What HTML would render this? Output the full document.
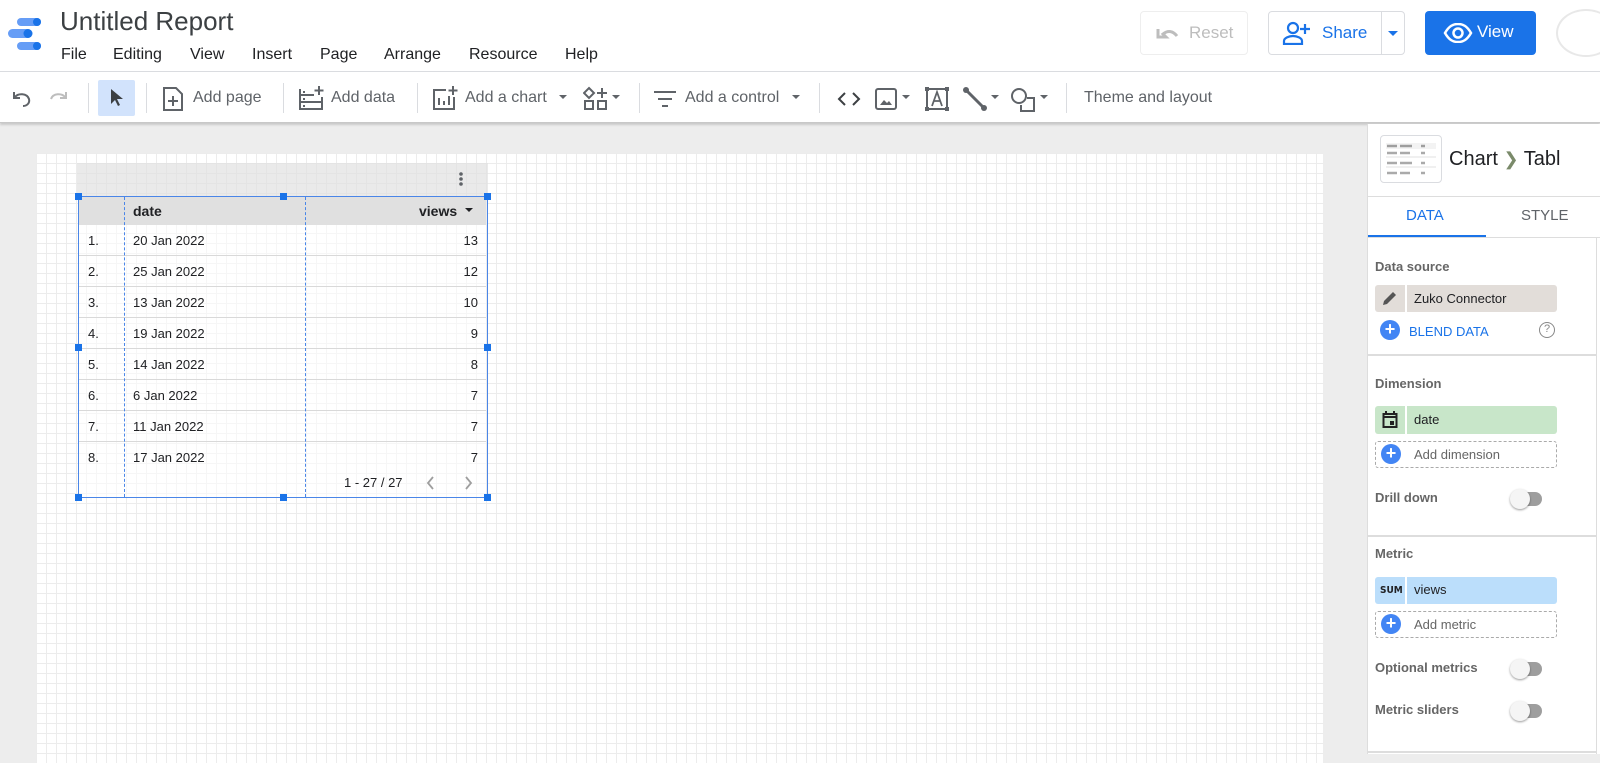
<!DOCTYPE html>
<html><head><meta charset="utf-8"><style>
*{box-sizing:border-box;margin:0;padding:0}
body{width:1600px;height:754px;overflow:hidden;font-family:"Liberation Sans",Arial,sans-serif;background:#ededed;position:relative;color:#202124}
.a{position:absolute}
.hdr{left:0;top:0;width:1600px;height:72px;background:#fff;border-bottom:1px solid #dadce0}
.tb{left:0;top:72px;width:1600px;height:51px;background:#fff;border-bottom:1px solid #c8c8c8;box-shadow:0 2px 2px rgba(0,0,0,.15)}
.menu span{position:absolute;top:46px;font-size:16px;color:#202124}
.tt{font-size:16px;color:#5f6368;top:89px}
.sep{width:1px;height:30px;background:#dadce0;top:83px}
.page{left:36px;top:153px;width:1287px;height:610px;background-color:#fff;
background-image:linear-gradient(#ececec 1px,transparent 1px),linear-gradient(90deg,#ececec 1px,transparent 1px);background-size:10px 10px}
.td{position:absolute;font-size:13px;color:#202124}
.rl{position:absolute;left:79px;width:407px;height:1px;background:#d9d9d9}
.panel{left:1367px;top:124px;width:233px;height:630px;background:#fff;border-left:1px solid #ddd}
.lbl{position:absolute;left:1375px;font-size:13px;font-weight:bold;color:#666}
.tog{position:absolute;left:1512px;width:30px;height:14px;border-radius:7px;background:#9e9e9e}
.tog:before{content:"";position:absolute;left:-2px;top:-3px;width:20px;height:20px;border-radius:50%;background:#f5f5f5;box-shadow:0 1px 2px rgba(0,0,0,.4)}
.plus{position:absolute;width:20px;height:20px;border-radius:50%;background:#4285f4;color:#fff;font-size:18px;line-height:19px;text-align:center;font-weight:bold}
.div{position:absolute;left:1368px;width:228px;height:2px;background:#ddd}
.h{position:absolute;width:7px;height:7px;background:#1a73e8}
</style></head><body>
<div class="a hdr"></div>
<svg class="a" style="left:8px;top:16px" width="36" height="36" viewBox="0 0 36 36">
<rect x="9" y="2" width="24" height="8" rx="4" fill="#669df6"/><circle cx="29" cy="6" r="4" fill="#1a73e8"/>
<rect x="0" y="13" width="24" height="9" rx="4.5" fill="#669df6"/><circle cx="20" cy="17.5" r="4.5" fill="#1a73e8"/>
<rect x="9" y="26" width="24" height="8" rx="4" fill="#669df6"/><circle cx="29" cy="30" r="4" fill="#1a73e8"/></svg>
<div class="a" style="left:60px;top:6px;font-size:26px;color:#3c4043">Untitled Report</div>
<div class="menu"><span style="left:61px">File</span><span style="left:113px">Editing</span><span style="left:190px">View</span><span style="left:252px">Insert</span><span style="left:320px">Page</span><span style="left:384px">Arrange</span><span style="left:469px">Resource</span><span style="left:565px">Help</span></div>
<div class="a" style="left:1140px;top:11px;width:108px;height:44px;border:1px solid #eee;border-radius:4px;color:#bdbdbd;font-size:17px;padding:11px 0 0 48px">Reset</div>
<svg class="a" style="left:1154px;top:25px" width="26" height="16" viewBox="0 0 26 16"><path d="M4 4v8h8l-3-3c5-4 10-3 14 2" fill="none" stroke="#bdbdbd" stroke-width="3"/></svg>
<div class="a" style="left:1268px;top:11px;width:137px;height:44px;border:1px solid #dadce0;border-radius:4px"></div>
<div class="a" style="left:1381px;top:12px;width:1px;height:42px;background:#dadce0"></div>
<svg class="a" style="left:1281px;top:21px" width="30" height="24" viewBox="0 0 30 24"><circle cx="12" cy="7" r="5" fill="none" stroke="#1a73e8" stroke-width="2.2"/><path d="M3 23v-3c0-3 5-5 9-5s9 2 9 5v3z" fill="none" stroke="#1a73e8" stroke-width="2.2"/><path d="M24 3v10M19 8h10" stroke="#1a73e8" stroke-width="2.2"/></svg>
<div class="a" style="left:1322px;top:23px;font-size:17px;color:#1a73e8">Share</div>
<div class="a" style="left:1388px;top:31px;border:5px solid transparent;border-top-color:#1a73e8"></div>
<div class="a" style="left:1425px;top:11px;width:111px;height:44px;background:#1a73e8;border-radius:4px;color:#fff;font-size:17px;padding:11px 0 0 52px;font-weight:500">View</div>
<svg class="a" style="left:1443px;top:23px" width="30" height="20" viewBox="0 0 30 20"><path d="M2 10C6 3 10 1 15 1s9 2 13 9c-4 7-8 9-13 9S6 17 2 10z" fill="none" stroke="#fff" stroke-width="2.5"/><circle cx="15" cy="10" r="4.5" fill="none" stroke="#fff" stroke-width="2.5"/></svg>
<div class="a" style="left:1556px;top:9px;width:60px;height:48px;border:2px solid #e8e8e8;border-radius:50%"></div>

<div class="a tb"></div>
<svg class="a" style="left:10px;top:88px" width="60" height="20" viewBox="0 0 60 20"><path d="M4 4v6h6M5 9c3-4 12-4 14 2 1 4-2 7-6 7" fill="none" stroke="#5f6368" stroke-width="2"/><path d="M56 4v6h-6M55 9c-3-4-12-4-14 2" fill="none" stroke="#bdbdbd" stroke-width="2"/></svg>
<div class="a sep" style="left:88px"></div>
<div class="a" style="left:98px;top:80px;width:37px;height:36px;background:#d2e3fc;border-radius:2px"></div>
<svg class="a" style="left:108px;top:88px" width="16" height="20" viewBox="0 0 16 20"><path d="M3 1v15l4-4 3 6 2-1-3-6h6z" fill="#3c4043"/></svg>
<div class="a sep" style="left:146px"></div>
<svg class="a" style="left:162px;top:86px" width="22" height="26" viewBox="0 0 22 26"><path d="M2 2h12l6 6v16H2z" fill="none" stroke="#5f6368" stroke-width="2"/><path d="M11 10v10M6 15h10" stroke="#5f6368" stroke-width="2"/></svg>
<div class="a tt" style="left:193px">Add page</div>
<div class="a sep" style="left:283px"></div>
<svg class="a" style="left:298px;top:85px" width="28" height="26" viewBox="0 0 28 26"><path d="M2 4v20h22V12M2 10h14M2 17h22M5 14h2M5 21h2M5 7h2" fill="none" stroke="#5f6368" stroke-width="2"/><path d="M21 1v9M16.5 5.5h9" stroke="#5f6368" stroke-width="2"/></svg>
<div class="a tt" style="left:331px">Add data</div>
<div class="a sep" style="left:417px"></div>
<svg class="a" style="left:432px;top:85px" width="28" height="26" viewBox="0 0 28 26"><path d="M14 5H2v19h20V12" fill="none" stroke="#5f6368" stroke-width="2"/><path d="M7 20v-7M12 20v-4M17 20v-9M21 1v9M16.5 5.5h9" stroke="#5f6368" stroke-width="2"/></svg>
<div class="a tt" style="left:465px">Add a chart</div>
<div class="a" style="left:559px;top:95px;border:4px solid transparent;border-top-color:#5f6368"></div>
<svg class="a" style="left:583px;top:86px" width="26" height="26" viewBox="0 0 26 26"><path d="M6 2l5 5-5 5-5-5z" fill="none" stroke="#5f6368" stroke-width="2"/><path d="M19 2v10M14 7h10" stroke="#5f6368" stroke-width="2"/><rect x="2" y="15" width="8" height="8" fill="none" stroke="#5f6368" stroke-width="2"/><rect x="15" y="15" width="8" height="8" fill="none" stroke="#5f6368" stroke-width="2"/></svg>
<div class="a" style="left:612px;top:95px;border:4px solid transparent;border-top-color:#5f6368"></div>
<div class="a sep" style="left:639px"></div>
<svg class="a" style="left:653px;top:90px" width="24" height="18" viewBox="0 0 24 18"><path d="M1 2h22M5 9h14M9 16h6" stroke="#5f6368" stroke-width="2"/></svg>
<div class="a tt" style="left:685px">Add a control</div>
<div class="a" style="left:792px;top:95px;border:4px solid transparent;border-top-color:#5f6368"></div>
<div class="a sep" style="left:819px"></div>
<svg class="a" style="left:836px;top:90px" width="26" height="18" viewBox="0 0 26 18"><path d="M9 3L3 9l6 6M17 3l6 6-6 6" fill="none" stroke="#3c4043" stroke-width="2"/></svg>
<svg class="a" style="left:874px;top:87px" width="24" height="24" viewBox="0 0 24 24"><rect x="2" y="2" width="20" height="20" rx="2" fill="none" stroke="#5f6368" stroke-width="2"/><path d="M6 18l4-5 3 3 2-2 3 4z" fill="#5f6368"/></svg>
<div class="a" style="left:902px;top:95px;border:4px solid transparent;border-top-color:#5f6368"></div>
<svg class="a" style="left:924px;top:86px" width="26" height="26" viewBox="0 0 26 26"><rect x="3" y="3" width="20" height="20" fill="none" stroke="#5f6368" stroke-width="2"/><rect x="1" y="1" width="4" height="4" fill="#5f6368"/><rect x="21" y="1" width="4" height="4" fill="#5f6368"/><rect x="1" y="21" width="4" height="4" fill="#5f6368"/><rect x="21" y="21" width="4" height="4" fill="#5f6368"/><path d="M8 20l5-14 5 14M10 15h6" fill="none" stroke="#5f6368" stroke-width="1.8"/></svg>
<svg class="a" style="left:962px;top:86px" width="26" height="26" viewBox="0 0 26 26"><path d="M4 4l18 18" stroke="#5f6368" stroke-width="3"/><circle cx="4" cy="4" r="3" fill="#5f6368"/><circle cx="22" cy="22" r="3" fill="#5f6368"/></svg>
<div class="a" style="left:991px;top:95px;border:4px solid transparent;border-top-color:#5f6368"></div>
<svg class="a" style="left:1010px;top:86px" width="28" height="28" viewBox="0 0 28 28"><circle cx="9" cy="10" r="7" fill="none" stroke="#5f6368" stroke-width="2"/><path d="M17 12h7v13H11v-6" fill="none" stroke="#5f6368" stroke-width="2"/></svg>
<div class="a" style="left:1040px;top:95px;border:4px solid transparent;border-top-color:#5f6368"></div>
<div class="a sep" style="left:1066px"></div>
<div class="a tt" style="left:1084px">Theme and layout</div>

<div class="a page"></div>
<div class="a" style="left:77px;top:163px;width:411px;height:33px;background:rgba(225,225,225,.7)"></div>
<svg class="a" style="left:458px;top:171px" width="6" height="16"><circle cx="3" cy="3" r="1.8" fill="#5f6368"/><circle cx="3" cy="8" r="1.8" fill="#5f6368"/><circle cx="3" cy="13" r="1.8" fill="#5f6368"/></svg>
<div class="a" style="left:79px;top:197px;width:407px;height:300px;background:rgba(255,255,255,.55)"></div>
<div class="a" style="left:79px;top:197px;width:407px;height:28px;background:#e0e0e0"></div>
<div class="td" style="left:133px;top:203px;font-size:14px;font-weight:bold">date</div>
<div class="td" style="left:419px;top:203px;font-size:14px;font-weight:bold">views</div>
<div class="a" style="left:465px;top:208px;border:4px solid transparent;border-top-color:#202124"></div>
<div class="rl" style="top:255px"></div><div class="rl" style="top:286px"></div><div class="rl" style="top:317px"></div><div class="rl" style="top:348px"></div><div class="rl" style="top:379px"></div><div class="rl" style="top:410px"></div><div class="rl" style="top:441px"></div>
<div class="td" style="left:88px;top:233px">1.</div><div class="td" style="left:133px;top:233px">20 Jan 2022</div><div class="td" style="right:1122px;top:233px">13</div>
<div class="td" style="left:88px;top:264px">2.</div><div class="td" style="left:133px;top:264px">25 Jan 2022</div><div class="td" style="right:1122px;top:264px">12</div>
<div class="td" style="left:88px;top:295px">3.</div><div class="td" style="left:133px;top:295px">13 Jan 2022</div><div class="td" style="right:1122px;top:295px">10</div>
<div class="td" style="left:88px;top:326px">4.</div><div class="td" style="left:133px;top:326px">19 Jan 2022</div><div class="td" style="right:1122px;top:326px">9</div>
<div class="td" style="left:88px;top:357px">5.</div><div class="td" style="left:133px;top:357px">14 Jan 2022</div><div class="td" style="right:1122px;top:357px">8</div>
<div class="td" style="left:88px;top:388px">6.</div><div class="td" style="left:133px;top:388px">6 Jan 2022</div><div class="td" style="right:1122px;top:388px">7</div>
<div class="td" style="left:88px;top:419px">7.</div><div class="td" style="left:133px;top:419px">11 Jan 2022</div><div class="td" style="right:1122px;top:419px">7</div>
<div class="td" style="left:88px;top:450px">8.</div><div class="td" style="left:133px;top:450px">17 Jan 2022</div><div class="td" style="right:1122px;top:450px">7</div>
<div class="td" style="left:344px;top:475px">1 - 27 / 27</div>
<svg class="a" style="left:425px;top:475px" width="50" height="16"><path d="M8 2L3 8l5 6M41 2l5 6-5 6" fill="none" stroke="#9e9e9e" stroke-width="1.8"/></svg>
<div class="a" style="left:78px;top:196px;width:410px;height:302px;border:1.5px solid #4a86e8"></div>
<div class="a" style="left:124px;top:197px;height:300px;border-left:1px dashed #4a86e8"></div>
<div class="a" style="left:305px;top:197px;height:300px;border-left:1px dashed #4a86e8"></div>
<div class="h" style="left:75px;top:193px"></div><div class="h" style="left:280px;top:193px"></div><div class="h" style="left:484px;top:193px"></div>
<div class="h" style="left:75px;top:344px"></div><div class="h" style="left:484px;top:344px"></div>
<div class="h" style="left:75px;top:494px"></div><div class="h" style="left:280px;top:494px"></div><div class="h" style="left:484px;top:494px"></div>

<div class="a panel"></div>
<div class="a" style="left:1380px;top:135px;width:62px;height:48px;border:1px solid #dadce0;border-radius:4px;background:#fff"></div>
<svg class="a" style="left:1386px;top:143px" width="50" height="34"><path d="M1 3h10M14 3h12M35 3h4" stroke="#555" stroke-width="2.5"/><path d="M1 10h10M14 10h10M35 10h4M1 20h10M14 20h12M35 20h4M1 30h10M14 30h10M35 30h4" stroke="#aaa" stroke-width="2.5"/><path d="M0 14h50M0 24h50" stroke="#e0e0e0"/><rect x="0" y="0" width="50" height="6" fill="#e8e8e8" opacity=".5"/></svg>
<div class="a" style="left:1449px;top:148px;font-size:20px;color:#202124;white-space:nowrap">Chart <span style="color:#7a8a6a;font-size:18px">&#x276F;</span> Tabl</div>
<div class="a" style="left:1368px;top:196px;width:232px;height:1px;background:#ddd"></div>
<div class="a" style="left:1406px;top:207px;font-size:15px;color:#1a73e8;font-weight:500">DATA</div>
<div class="a" style="left:1521px;top:207px;font-size:15px;color:#5f6368">STYLE</div>
<div class="a" style="left:1368px;top:235px;width:118px;height:3px;background:#1a73e8"></div>
<div class="a" style="left:1368px;top:237px;width:232px;height:1px;background:#ddd"></div>
<div class="a" style="left:1596px;top:237px;width:1px;height:517px;background:#ddd"></div>
<div class="lbl" style="top:259px">Data source</div>
<div class="a" style="left:1375px;top:285px;width:182px;height:27px;background:#e2ddd9;border-radius:3px"></div>
<div class="a" style="left:1405px;top:285px;width:2px;height:27px;background:#fff"></div>
<svg class="a" style="left:1382px;top:290px" width="16" height="16"><path d="M1 15l1-4L11 2l3 3-9 9z" fill="#555"/></svg>
<div class="a" style="left:1414px;top:291px;font-size:13px">Zuko Connector</div>
<div class="plus" style="left:1380px;top:320px">+</div>
<div class="a" style="left:1409px;top:324px;font-size:13px;color:#1a73e8">BLEND DATA</div>
<div class="a" style="left:1539px;top:322px;width:16px;height:16px;border:1.5px solid #888;border-radius:50%;font-size:11px;color:#888;text-align:center;line-height:13px">?</div>
<div class="div" style="top:354px"></div>
<div class="lbl" style="top:376px">Dimension</div>
<div class="a" style="left:1375px;top:406px;width:182px;height:28px;background:#c8e6c9;border-radius:3px"></div>
<div class="a" style="left:1405px;top:406px;width:2px;height:28px;background:#fff"></div>
<svg class="a" style="left:1382px;top:411px" width="16" height="18"><rect x="1.5" y="3" width="13" height="13" fill="none" stroke="#222" stroke-width="2"/><path d="M1 6h14M4 0v4M12 0v4" stroke="#222" stroke-width="2"/><rect x="8" y="10" width="4" height="4" fill="#222"/></svg>
<div class="a" style="left:1414px;top:412px;font-size:13px">date</div>
<div class="a" style="left:1375px;top:441px;width:182px;height:27px;border:1px dashed #aaa;border-radius:3px"></div>
<div class="plus" style="left:1381px;top:444px">+</div>
<div class="a" style="left:1414px;top:447px;font-size:13px;color:#666">Add dimension</div>
<div class="lbl" style="top:490px">Drill down</div>
<div class="tog" style="top:492px"></div>
<div class="div" style="top:535px"></div>
<div class="lbl" style="top:546px">Metric</div>
<div class="a" style="left:1375px;top:577px;width:182px;height:27px;background:#bbdefb;border-radius:3px"></div>
<div class="a" style="left:1405px;top:577px;width:2px;height:27px;background:#fff"></div>
<div class="a" style="left:1380px;top:585px;font-size:10px;font-weight:bold;font-family:'DejaVu Sans Condensed','DejaVu Sans',sans-serif">SUM</div>
<div class="a" style="left:1414px;top:582px;font-size:13px">views</div>
<div class="a" style="left:1375px;top:611px;width:182px;height:27px;border:1px dashed #aaa;border-radius:3px"></div>
<div class="plus" style="left:1381px;top:614px">+</div>
<div class="a" style="left:1414px;top:617px;font-size:13px;color:#666">Add metric</div>
<div class="lbl" style="top:660px">Optional metrics</div>
<div class="tog" style="top:662px"></div>
<div class="lbl" style="top:702px">Metric sliders</div>
<div class="tog" style="top:704px"></div>
<div class="div" style="top:751px"></div>
</body></html>
